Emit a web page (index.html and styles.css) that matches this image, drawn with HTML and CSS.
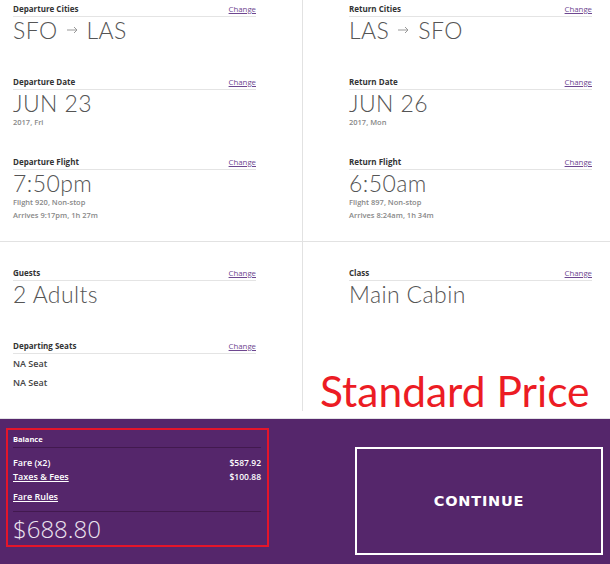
FILE: index.html
```html
<!DOCTYPE html>
<html>
<head>
<meta charset="utf-8">
<link rel="stylesheet" href="styles.css">
</head>
<body>
<div class="summary">
  <div class="section top">
    <div class="col col-left">
      <div class="field gap-a">
        <div class="field-head"><span class="label">Departure Cities</span><a class="change">Change</a></div>
        <div class="value">SFO<svg class="arrow" width="11" height="8" viewBox="0 0 11 8"><path d="M0 4H10M7 1L10 4L7 7" fill="none" stroke="#999" stroke-width="1"/></svg>LAS</div>
      </div>
      <div class="field gap-b">
        <div class="field-head"><span class="label">Departure Date</span><a class="change">Change</a></div>
        <div class="value">JUN 23</div>
        <div class="sub">2017, Fri</div>
      </div>
      <div class="field">
        <div class="field-head"><span class="label">Departure Flight</span><a class="change">Change</a></div>
        <div class="value">7:50pm</div>
        <div class="sub">Flight 920, Non-stop</div>
        <div class="sub">Arrives 9:17pm, 1h 27m</div>
      </div>
    </div>
    <div class="col col-right">
      <div class="field gap-a">
        <div class="field-head"><span class="label">Return Cities</span><a class="change">Change</a></div>
        <div class="value">LAS<svg class="arrow" width="11" height="8" viewBox="0 0 11 8"><path d="M0 4H10M7 1L10 4L7 7" fill="none" stroke="#999" stroke-width="1"/></svg>SFO</div>
      </div>
      <div class="field gap-b">
        <div class="field-head"><span class="label">Return Date</span><a class="change">Change</a></div>
        <div class="value">JUN 26</div>
        <div class="sub">2017, Mon</div>
      </div>
      <div class="field">
        <div class="field-head"><span class="label">Return Flight</span><a class="change">Change</a></div>
        <div class="value">6:50am</div>
        <div class="sub">Flight 897, Non-stop</div>
        <div class="sub">Arrives 8:24am, 1h 34m</div>
      </div>
    </div>
  </div>
  <div class="section bottom">
    <div class="col col-left">
      <div class="field gap-a">
        <div class="field-head"><span class="label">Guests</span><a class="change">Change</a></div>
        <div class="value">2 Adults</div>
      </div>
      <div class="field">
        <div class="field-head"><span class="label">Departing Seats</span><a class="change">Change</a></div>
        <div class="seat">NA Seat</div>
        <div class="seat">NA Seat</div>
      </div>
    </div>
    <div class="col col-right">
      <div class="field">
        <div class="field-head"><span class="label">Class</span><a class="change">Change</a></div>
        <div class="value">Main Cabin</div>
      </div>
    </div>
  </div>
</div>
<div class="footer">
  <div class="balance">
    <div class="balance-title">Balance</div>
    <div class="rows">
      <div class="row"><span>Fare (x2)</span><span>$587.92</span></div>
      <div class="row"><a class="ulink">Taxes &amp; Fees</a><span>$100.88</span></div>
      <div class="rules"><a class="ulink">Fare Rules</a></div>
    </div>
    <div class="total">$688.80</div>
  </div>
  <button class="continue">CONTINUE</button>
</div>
<div class="annot-text">Standard Price</div>
<div class="annot-box"></div>
</body>
</html>
```
FILE: styles.css
```css
* { box-sizing: border-box; }
html, body { margin: 0; padding: 0; }
body {
  width: 610px;
  height: 564px;
  overflow: hidden;
  position: relative;
  background: #fff;
  font-family: "Open Sans", "Liberation Sans", sans-serif;
  color: #333;
}
.summary {
  padding-bottom: 7px;
  border-bottom: 1px solid #e2e2e6;
}
.section {
  display: flex;
}
.section.top {
  height: 242px;
  padding-top: 3px;
  border-bottom: 1px solid #e2e2e2;
}
.section.bottom {
  height: 169px;
  padding-top: 25px;
}
.col { flex: none; }
.col-left {
  width: 303px;
  padding: 0 46px 0 13px;
  border-right: 1px solid #e2e2e2;
  margin-top: -3px;
  padding-top: 3px;
}
.section.bottom .col-left { margin-top: -25px; padding-top: 25px; }
.col-right {
  width: 307px;
  padding: 0 18px 0 46px;
}
.field-head {
  display: flex;
  justify-content: space-between;
  align-items: baseline;
  height: 14px;
  line-height: 12px;
  border-bottom: 1px solid #e4e4e4;
}
.label {
  font-size: 8px;
  font-weight: 700;
  color: #333;
}
.change {
  font-size: 7.8px;
  color: #6e4790;
  text-decoration: underline;
}
.value {
  font-family: Lato, "Open Sans", sans-serif;
  font-size: 23px;
  font-weight: 300;
  line-height: 26px;
  color: #555;
  letter-spacing: 0.4px;
}
.arrow {
  display: inline-block;
  vertical-align: 5px;
  margin: 0 9px 0 9px;
}
.sub {
  font-size: 7.5px;
  line-height: 13px;
  color: #888;
  font-weight: 600;
}
.seat {
  font-size: 9px;
  line-height: 19px;
  color: #444;
  font-weight: 600;
}
.gap-a { margin-bottom: 33px; }
.gap-b { margin-bottom: 27px; }

.footer {
  height: 145px;
  background: #55266b;
  display: flex;
  padding: 14px 7px 0 13px;
}
.balance {
  width: 248px;
  color: #fff;
}
.balance-title {
  font-size: 7.5px;
  font-weight: 700;
  line-height: 12px;
  padding-bottom: 2px;
  border-bottom: 1px solid #42194f;
}
.rows {
  padding-top: 8px;
  padding-bottom: 7px;
  border-bottom: 1px solid #42194f;
}
.row {
  display: flex;
  justify-content: space-between;
  font-size: 9px;
  font-weight: 600;
  line-height: 13.5px;
}
.row span:last-child { font-size: 8.5px; }
.ulink { text-decoration: underline; color: #fff; }
.rules {
  margin-top: 7px;
  font-size: 9px;
  font-weight: 600;
  line-height: 14px;
}
.total {
  margin-top: 4px;
  font-size: 24px;
  font-weight: 300;
  line-height: 26px;
  color: #ece4f0;
}
.continue {
  margin-left: auto;
  margin-top: 14px;
  width: 248px;
  height: 108px;
  border: 2px solid #fff;
  background: transparent;
  color: #fff;
  font-family: "DejaVu Sans", "Liberation Sans", sans-serif;
  font-size: 14.5px;
  font-weight: 700;
  letter-spacing: 0.8px;
  padding: 0;
}
.annot-text {
  position: absolute;
  left: 320px;
  top: 370px;
  font-family: Lato, "Liberation Sans", sans-serif;
  font-size: 42.5px;
  line-height: 42.5px;
  color: #ec1c24;
  white-space: nowrap;
}
.annot-box {
  position: absolute;
  left: 6px;
  top: 428px;
  width: 263px;
  height: 119px;
  border: 2px solid #e5152a;
}
```
